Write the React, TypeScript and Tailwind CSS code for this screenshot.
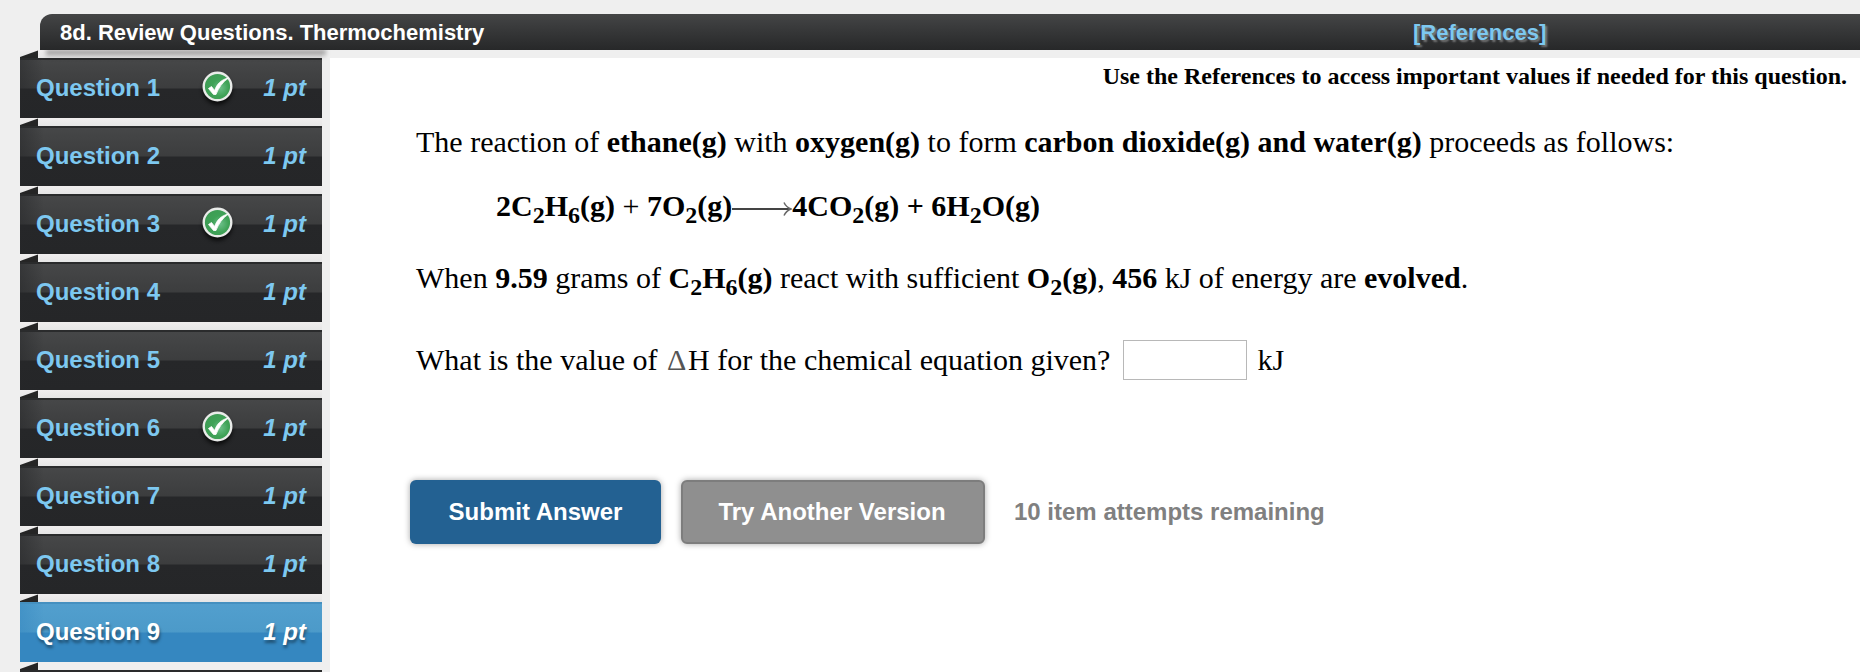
import React from "react";

type Question = { n: number; done?: boolean; active?: boolean };

const questions: Question[] = [
  { n: 1, done: true },
  { n: 2 },
  { n: 3, done: true },
  { n: 4 },
  { n: 5 },
  { n: 6, done: true },
  { n: 7 },
  { n: 8 },
  { n: 9, active: true },
];

function CheckBadge() {
  return (
    <svg width="36" height="40" viewBox="0 0 36 40" className="shrink-0 overflow-visible">
      <defs>
        <radialGradient id="green" cx="0.6" cy="0.55" r="0.6">
          <stop offset="0" stopColor="#6dc08a" />
          <stop offset="0.5" stopColor="#3fa257" />
          <stop offset="1" stopColor="#3d9c54" />
        </radialGradient>
        <filter id="soft" x="-30%" y="-30%" width="160%" height="160%">
          <feGaussianBlur stdDeviation="2.2" />
        </filter>
      </defs>
      <circle cx="15.5" cy="22" r="14.5" fill="#000" opacity="0.75" filter="url(#soft)" />
      <circle cx="15.5" cy="18.5" r="13.8" fill="url(#green)" stroke="#e9ebe9" strokeWidth="2.4" />
      <path d="M6.5 20.5 L9.5 18.5 L12.6 22.5 C15 16 19 11.5 26.5 10 C20.5 14 16.5 20 14 26.5 L11.5 26.5 Z" fill="#fff" stroke="#fff" strokeWidth="0.8" />
    </svg>
  );
}

function Fold() {
  return (
    <svg width="18" height="8" viewBox="0 0 18 8" className="block">
      <path d="M0 7 L18 0.5 V8 H0 Z" fill="#252525" />
    </svg>
  );
}

function QuestionRow({ n, done, active }: Question) {
  return (
    <li className="h-[68px] shrink-0">
      <div className="h-2 bg-gradient-to-b from-[#f0eeee] to-[#e6e6e6]">
        <Fold />
      </div>
      <div
        className={
          active
            ? "flex h-[60px] items-center border-t-2 border-[#4590c0] bg-[linear-gradient(90deg,rgba(53,135,192,0.5),transparent_24px),linear-gradient(#529fce_0,#4c9ac9_28px,#3587c0_29px,#3587c0_100%)] pr-4 pb-0.5 pl-4 text-white [text-shadow:1px_3px_3px_rgba(0,0,0,0.4)]"
            : "flex h-[60px] items-center border-t-2 border-[#2a2b2c] bg-[linear-gradient(90deg,rgba(38,39,41,0.5),transparent_24px),linear-gradient(#464748_0,#3c3d3e_28px,#262729_29px,#252628_100%)] pr-4 pb-0.5 pl-4 text-[#7dc8f0]"
        }
      >
        <span className="w-[166px]">Question {n}</span>
        <span className="flex w-[54px] items-center">{done && <CheckBadge />}</span>
        <span className="ml-auto italic">1 pt</span>
      </div>
    </li>
  );
}

function Sub({ children }: { children: React.ReactNode }) {
  return <span className="relative top-[7px] text-[24px] leading-none">{children}</span>;
}

function LongArrow() {
  return (
    <svg width="60" height="18" viewBox="0 0 60 18" className="inline-block align-[-2px]" fill="none">
      <path d="M0 9 H58" stroke="#444" strokeWidth="2" />
      <path d="M52 2.5 Q54 7 59 9 Q54 11 52 15.5" stroke="#666" strokeWidth="1.5" />
    </svg>
  );
}

export default function App() {
  return (
    <div className="flex h-[672px] w-[1860px] flex-col overflow-hidden bg-[#efefef] pt-3.5 font-['Liberation_Sans',Arial,sans-serif]">
      <header className="z-10 ml-10 flex h-9 shrink-0 items-center rounded-tl-xl bg-gradient-to-b from-[#444546] to-[#272829] pt-0.5 pl-5 text-[22px] leading-none font-bold text-white">
        <h1 className="w-[1353px]">8d. Review Questions. Thermochemistry</h1>
        <a className="text-[#7dc8f0] [text-shadow:2px_2px_2px_rgba(255,255,255,0.35)]">[References]</a>
      </header>

      <div className="flex min-h-0 flex-1">
        <nav className="relative ml-5 w-[302px] shrink-0 text-2xl leading-none font-bold">
          <div className="absolute top-0 left-[26px] h-2 w-[280px] bg-gradient-to-b from-black/45 to-transparent blur-[2px]" />
          <ul className="flex flex-col">
            {questions.map((q) => (
              <QuestionRow key={q.n} {...q} />
            ))}
            <li className="shrink-0">
              <Fold />
              <div className="h-[60px] bg-[#2a2b2c]" />
            </li>
          </ul>
        </nav>

        <main className="mt-2 ml-2 flex-1 bg-white font-['Liberation_Serif','Times_New_Roman',serif] text-black">
          <p className="pt-1 pr-[13px] text-right text-2xl leading-7 font-bold">
            Use the References to access important values if needed for this question.
          </p>

          <section className="flex flex-col pl-[86px] text-[30px] leading-[34px] whitespace-nowrap">
            <p className="mt-[35px]">
              The reaction of <b>ethane(g)</b> with <b>oxygen(g)</b> to form <b>carbon dioxide(g) and water(g)</b> proceeds as follows:
            </p>
            <p className="mt-[30px] h-[34px] pl-20">
              <b>2C<Sub>2</Sub>H<Sub>6</Sub>(g)</b> + <b>7O<Sub>2</Sub>(g)</b>
              <LongArrow />
              <b>4CO<Sub>2</Sub>(g) + 6H<Sub>2</Sub>O(g)</b>
            </p>
            <p className="mt-[38px] h-[34px]">
              When <b>9.59</b> grams of <b>C<Sub>2</Sub>H<Sub>6</Sub>(g)</b> react with sufficient <b>O<Sub>2</Sub>(g)</b>, <b>456</b> kJ of energy are <b>evolved</b>.
            </p>
            <div className="mt-[45px] flex h-10 items-center">
              <label htmlFor="answer">
                What is the value of <span className="inline-block w-[23px] pl-0.5 text-[#555]">Δ</span>H for the chemical equation given?
              </label>
              <input id="answer" className="mr-2.5 ml-[13px] h-10 w-[124px] border border-[#b8b8b8] bg-white" />
              <span>kJ</span>
            </div>
          </section>

          <div className="mt-[100px] flex items-center pl-20 font-['Liberation_Sans',Arial,sans-serif] text-2xl font-bold">
            <button className="h-16 w-[251px] rounded-md bg-[#236192] text-white shadow-[0_0_6px_rgba(0,0,0,0.35)]">Submit Answer</button>
            <button className="ml-5 h-16 w-[304px] rounded-md border-2 border-[#7d7d7d] bg-[#8f8f8f] pr-0.5 text-white shadow-[0_0_6px_rgba(0,0,0,0.35)]">
              Try Another Version
            </button>
            <span className="ml-[29px] text-[#808080]">10 item attempts remaining</span>
          </div>
        </main>
      </div>
    </div>
  );
}
